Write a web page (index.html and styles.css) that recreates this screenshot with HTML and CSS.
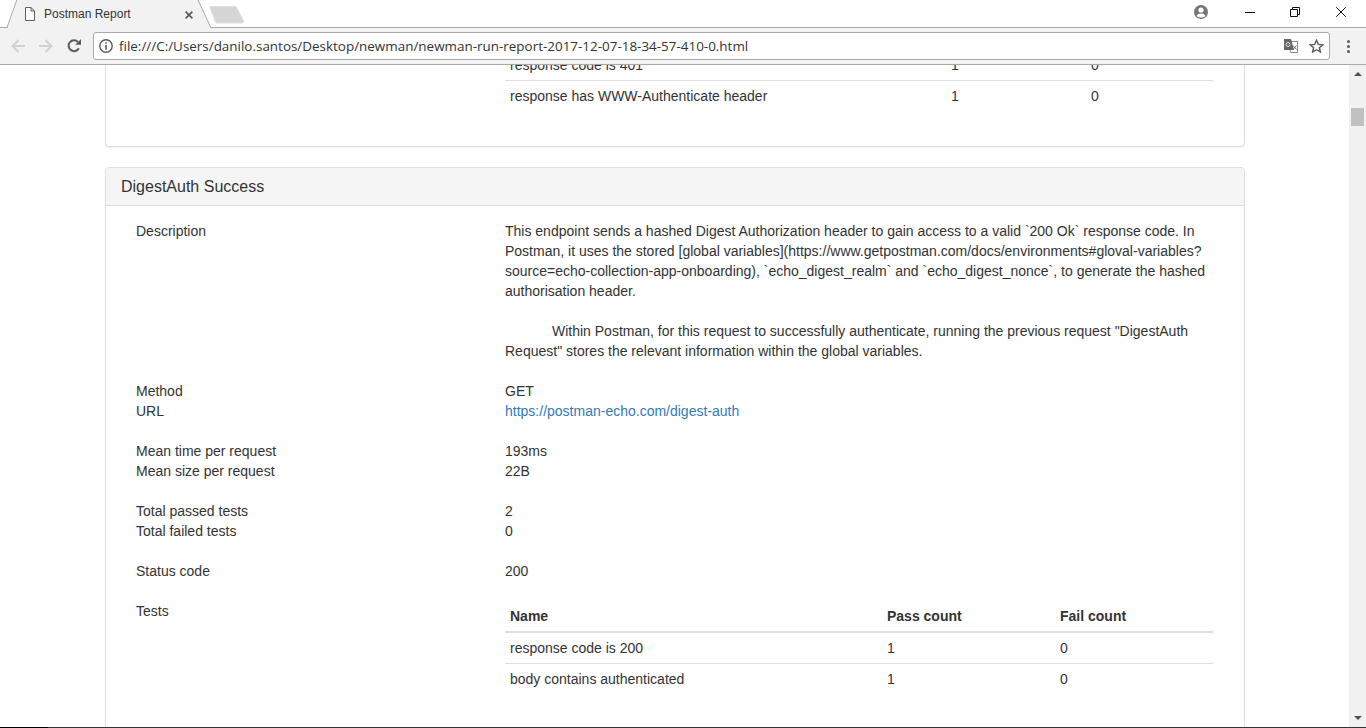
FILE: index.html
```html
<!DOCTYPE html>
<html lang="en">
<head>
<meta charset="utf-8">
<title>Postman Report</title>
<link rel="stylesheet" href="styles.css">
</head>
<body>
<div class="window">
  <header class="chrome">
    <div class="tabstrip">
      <div class="tab">
        <svg class="tab-shape" width="216" height="28" viewBox="0 0 216 28"><path d="M7.5 28 17 0H198L211 28Z" fill="#f2f2f2"/><path d="M0 27.5H7L16.8 0M198 0 210.8 27.5H216" fill="none" stroke="#a9a9a9"/></svg>
        <svg class="tab-doc" width="10" height="14" viewBox="0 0 10 14"><path d="M.5.5H6L9.5 4V13.5H.5ZM6 .5V4H9.5" fill="#fff" stroke="#5f5f5f"/></svg>
        <span class="tab-title">Postman Report</span>
        <svg class="tab-close" width="8" height="8" viewBox="0 0 8 8"><path d="M.6.6 7.4 7.4M7.4.6.6 7.4" stroke="#5a5a5a" stroke-width="1.7"/></svg>
      </div>
      <svg class="newtab" width="36" height="18" viewBox="0 0 36 18"><path d="M1 1.5Q1 .5 2 .5H26Q27 .5 27.5 1.5L34.5 15Q35 17 33 17H8Q7 17 6.5 16Z" fill="#d5d5d5" stroke="#dedede"/></svg>
      <div class="strip-fill"></div>
      <svg class="profile" width="14" height="14" viewBox="0 0 14 14"><circle cx="7" cy="7" r="7" fill="#757575"/><circle cx="7" cy="5" r="2.6" fill="#fff"/><path d="M2.5 11Q3.5 8.6 7 8.6T11.5 11Q9.8 12.6 7 12.6T2.5 11Z" fill="#fff"/></svg>
      <div class="win-btns">
        <svg width="10" height="10" viewBox="0 0 10 10"><path d="M0 5.5H10" stroke="#111"/></svg>
        <svg width="10" height="10" viewBox="0 0 10 10"><path d="M.5 2.5H7.5V9.5H.5ZM2.5 2.5V.5H9.5V7.5H7.5" fill="none" stroke="#111"/></svg>
        <svg class="win-close" width="10" height="10" viewBox="0 0 10 10"><path d="M.2.2 9.8 9.8M9.8.2.2 9.8" stroke="#111"/></svg>
      </div>
    </div>
    <div class="toolbar">
      <svg class="nav" width="14" height="14" viewBox="0 0 14 14"><path d="M14 7H1.5M7.5 1 1.5 7 7.5 13" fill="none" stroke="#d0d0d0" stroke-width="2"/></svg>
      <svg class="nav" width="14" height="14" viewBox="0 0 14 14"><path d="M0 7H12.5M6.5 1 12.5 7 6.5 13" fill="none" stroke="#d0d0d0" stroke-width="2"/></svg>
      <svg class="nav" width="14" height="14" viewBox="0 0 14 14"><path d="M11.8 9.2A5.4 5.4 0 1 1 11 3.1" fill="none" stroke="#5a5a5a" stroke-width="2"/><path d="M8.2 5.8H14V0Z" fill="#5a5a5a"/></svg>
      <div class="omnibox">
        <svg class="info" width="14" height="14" viewBox="0 0 14 14"><circle cx="7" cy="7" r="6.2" fill="none" stroke="#5a5a5a" stroke-width="1.4"/><path d="M7 6V10.8M7 3.2V4.8" stroke="#5a5a5a" stroke-width="1.6"/></svg>
        <span class="url">file:///C:/Users/danilo.santos/Desktop/newman/newman-run-report-2017-12-07-18-34-57-410-0.html</span>
        <svg class="translate" width="14" height="14" viewBox="0 0 14 14"><path d="M5 2.5H13.5V13.5H6.5Z" fill="#fff" stroke="#8a8a8a"/><path d="M0 0H7L10 11H0Z" fill="#666"/><circle cx="4" cy="5.5" r="2" fill="none" stroke="#ddd"/><path d="M9 6.5 12.5 10.5M12.5 6.5 9 10.5" stroke="#777"/></svg>
        <svg class="star" width="15" height="14" viewBox="0 0 15 14"><path d="M7.5 1.3 9.3 5.4 13.8 5.8 10.4 8.7 11.4 13 7.5 10.7 3.6 13 4.6 8.7 1.2 5.8 5.7 5.4Z" fill="none" stroke="#5a5a5a" stroke-width="1.4"/></svg>
      </div>
      <div class="menu-dots"><i></i><i></i><i></i></div>
    </div>
  </header>
  <div class="viewport">
    <main class="page">
      <div class="report">
        <section class="card">
          <div class="card-body card-body-scrolled">
            <div class="field">
              <div class="label"></div>
              <div class="value">
                <table class="tests tests-auth">
                  <tbody>
                    <tr><td>response code is 401</td><td>1</td><td>0</td></tr>
                    <tr><td>response has WWW-Authenticate header</td><td>1</td><td>0</td></tr>
                  </tbody>
                </table>
              </div>
            </div>
          </div>
        </section>
        <section class="card">
          <h2 class="card-head">DigestAuth Success</h2>
          <div class="card-body">
            <div class="field">
              <div class="label">Description</div>
              <div class="value">
                <p>This endpoint sends a hashed Digest Authorization header to gain access to a valid `200 Ok` response code. In Postman, it uses the stored [global variables](https://www.getpostman.com/docs/environments#gloval-variables?source=echo-collection-app-onboarding), `echo_digest_realm` and `echo_digest_nonce`, to generate the hashed authorisation header.</p>
                <p class="indented">Within Postman, for this request to successfully authenticate, running the previous request "DigestAuth Request" stores the relevant information within the global variables.</p>
              </div>
            </div>
            <div class="group">
              <div class="field"><div class="label">Method</div><div class="value">GET</div></div>
              <div class="field"><div class="label">URL</div><div class="value"><a href="#">https://postman-echo.com/digest-auth</a></div></div>
            </div>
            <div class="group">
              <div class="field"><div class="label">Mean time per request</div><div class="value">193ms</div></div>
              <div class="field"><div class="label">Mean size per request</div><div class="value">22B</div></div>
            </div>
            <div class="group">
              <div class="field"><div class="label">Total passed tests</div><div class="value">2</div></div>
              <div class="field"><div class="label">Total failed tests</div><div class="value">0</div></div>
            </div>
            <div class="group">
              <div class="field"><div class="label">Status code</div><div class="value">200</div></div>
            </div>
            <div class="group">
              <div class="field">
                <div class="label">Tests</div>
                <div class="value">
                  <table class="tests tests-digest">
                    <thead><tr><th>Name</th><th>Pass count</th><th>Fail count</th></tr></thead>
                    <tbody>
                      <tr><td>response code is 200</td><td>1</td><td>0</td></tr>
                      <tr><td>body contains authenticated</td><td>1</td><td>0</td></tr>
                    </tbody>
                  </table>
                </div>
              </div>
            </div>
          </div>
        </section>
      </div>
    </main>
    <aside class="scrollbar">
      <span class="arrow-up"></span>
      <span class="thumb"></span>
      <span class="arrow-down"></span>
    </aside>
  </div>
  <footer class="taskbar"></footer>
</div>
</body>
</html>
```
FILE: styles.css
```css
* { box-sizing: border-box; }
html, body { margin: 0; height: 100%; overflow: hidden; }
body { font-family: "Liberation Sans", Arial, sans-serif; font-size: 14px; line-height: 20px; color: #333; background: #fff; }
.window { display: flex; flex-direction: column; width: 1366px; height: 728px; }

.chrome { position: relative; z-index: 1; flex: none; height: 65px; display: flex; flex-direction: column; }
.tabstrip { height: 28px; display: flex; align-items: flex-start; background: #fff; border-bottom: 1px solid #a9a9a9; }
.tab { position: relative; flex: none; width: 216px; height: 28px; display: flex; align-items: center; font-size: 12px; color: #333; }
.tab-shape { position: absolute; left: 0; top: 0; }
.tab-doc { position: relative; margin-left: 25px; }
.tab-title { position: relative; margin-left: 9px; width: 141px; white-space: nowrap; font-size: 12px; }
.tab-close { position: relative; margin-top: 1px; }
.newtab { flex: none; margin: 6px 0 0 -7px; }
.strip-fill { flex: 1; }
.profile { flex: none; margin: 5px 37px 0 0; }
.win-btns { flex: none; display: flex; width: 121px; gap: 35px; padding-top: 7px; align-items: flex-start; }
.win-close { margin-left: 1px; }

.toolbar { flex: none; height: 37px; display: flex; align-items: center; background: #f2f2f2; border-bottom: 1px solid #a9a9a9; padding-left: 11px; }
.nav { flex: none; margin-right: 14px; }
.toolbar .nav:nth-child(3) { margin-right: 12px; }
.omnibox { flex: none; width: 1237px; height: 28px; display: flex; align-items: center; background: #fff; border: 1px solid #a9a9a9; border-radius: 3px; padding: 0 5px; }
.info { flex: none; }
.url { flex: 1; margin-left: 6px; font-family: "Open Sans", "Liberation Sans", sans-serif; font-size: 13.45px; white-space: nowrap; color: #333; }
.translate { flex: none; margin-right: 11px; }
.star { flex: none; }
.menu-dots { flex: none; margin-left: 17px; display: flex; flex-direction: column; gap: 2px; }
.menu-dots i { display: block; width: 3px; height: 3px; border-radius: 50%; background: #5a5a5a; }

.viewport { flex: 1; min-height: 0; display: flex; }
.page { flex: 1; min-width: 0; overflow: hidden; }
.report { width: 1140px; margin: -31px 0 0 105px; }
.scrollbar { position: relative; flex: none; width: 17px; background: #f1f1f1; }
.thumb { position: absolute; left: 2px; top: 43px; width: 13px; height: 18px; background: #c1c1c1; }
.arrow-up { position: absolute; left: 5px; top: 7px; border: 4px solid transparent; border-top: 0; border-bottom: 4px solid #505050; }
.arrow-down { position: absolute; left: 5px; bottom: 7px; border: 4px solid transparent; border-bottom: 0; border-top: 4px solid #505050; }
.taskbar { flex: none; height: 1px; background: linear-gradient(90deg, #000 48px, #333 48px); }

.card { background: #fff; border: 1px solid #ddd; border-radius: 4px; margin-bottom: 20px; box-shadow: 0 1px 1px rgba(0,0,0,.05); }
.card-head { margin: 0; padding: 10px 15px; height: 38px; font-size: 16px; font-weight: 400; line-height: 18px; color: #333; background: #f5f5f5; border-bottom: 1px solid #ddd; border-radius: 3px 3px 0 0; }
.card-body { padding: 15px 30px 15px 30px; }
.card-body-scrolled { padding-top: 15px; }
.field { display: flex; }
.label { flex: none; width: 369px; }
.value { flex: none; width: 708px; }
.value p { margin: 0; }
.value p + p { margin-top: 20px; }
.indented { text-indent: 47px; }
.group { margin-top: 20px; }
a { color: #337ab7; text-decoration: none; }

.tests { width: 708px; border-collapse: collapse; table-layout: fixed; margin-bottom: 20px; }
.tests th, .tests td { padding: 5px; text-align: left; line-height: 20px; }
.tests th { font-weight: 700; border-bottom: 2px solid #ddd; }
.tests td { border-top: 1px solid #ddd; }
.tests tbody tr:first-child td { border-top: 0; }
.tests-auth td:nth-child(1) { width: 441px; }
.tests-auth td:nth-child(2) { width: 140px; }
.tests-digest th:nth-child(1) { width: 377px; }
.tests-digest th:nth-child(2) { width: 173px; }
```
